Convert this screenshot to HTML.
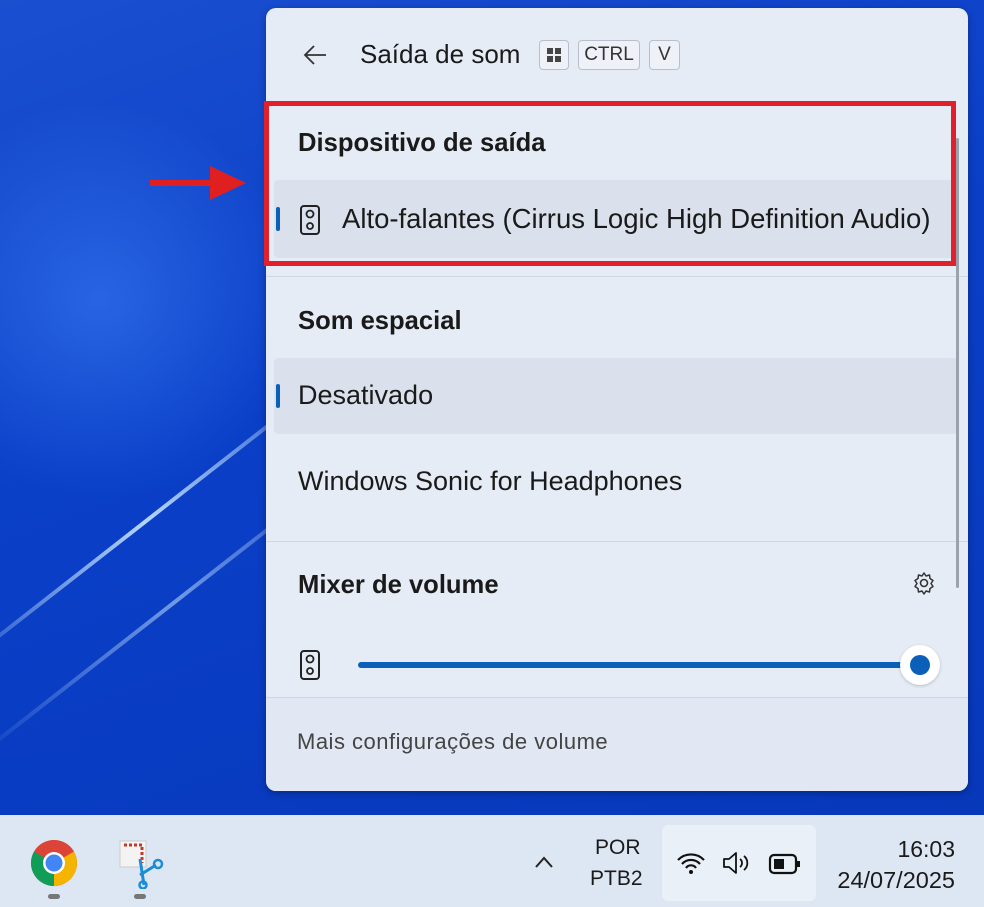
<!DOCTYPE html>
<html><head><meta charset="utf-8"><style>
*{margin:0;padding:0;box-sizing:border-box}
body{width:984px;height:907px;overflow:hidden;position:relative;font-family:"Liberation Sans",sans-serif;
background:linear-gradient(160deg,#1a4fd0 0%,#0a3fc8 40%,#0637b8 100%);}
.streak{position:absolute;left:-60px;top:680px;width:520px;height:4px;background:linear-gradient(90deg,rgba(255,255,255,0),rgba(200,230,255,.9),rgba(255,255,255,0));transform:rotate(-38deg);transform-origin:left}
.glow{position:absolute;left:-100px;top:100px;width:400px;height:400px;background:radial-gradient(ellipse,rgba(70,140,255,.45),rgba(0,0,0,0) 70%)}
.panel{position:absolute;left:266px;top:8px;width:702px;height:783px;background:#e6ecf6;border-radius:10px;box-shadow:0 2px 8px rgba(0,0,0,.3)}
.t{position:absolute;color:#1a1a1a;white-space:nowrap}
.key{position:absolute;top:32px;height:30px;border:1px solid #b8bfca;border-radius:4px;background:#eef2f8;font-size:19px;color:#333;line-height:28px;text-align:center}
.sep{position:absolute;left:0;width:702px;height:1px;background:#d0d7e2}
.sel{position:absolute;left:8px;width:684px;background:#dae1ec;border-radius:4px}
.bar{position:absolute;left:10px;width:4px;height:24px;background:#0a5fb8;border-radius:2px}
.taskbar{position:absolute;left:0;top:815px;width:984px;height:92px;background:#dde6f3}
</style></head><body>
<div class="glow"></div>
<div class="streak"></div>
<div class="streak" style="top:760px;left:-30px;opacity:.6"></div>
<div style="position:absolute;left:150px;top:180px;width:62px;height:6px;background:#e02020"></div>
<div style="position:absolute;left:210px;top:166px;width:0;height:0;border-top:17px solid transparent;border-bottom:17px solid transparent;border-left:36px solid #e02020"></div>
<div class="panel">
  <svg style="position:absolute;left:36px;top:35px" width="26" height="24" viewBox="0 0 26 24"><path d="M24 12H3M12 3L3 12l9 9" fill="none" stroke="#333" stroke-width="1.8"/></svg>
  <div class="t" style="left:94px;top:31px;font-size:26px">Saída de som</div>
  <div class="key" style="left:273px;width:30px"><svg width="14" height="14" viewBox="0 0 14 14" style="margin-top:7px"><rect x="0" y="0" width="6" height="6" fill="#444"/><rect x="8" y="0" width="6" height="6" fill="#444"/><rect x="0" y="8" width="6" height="6" fill="#444"/><rect x="8" y="8" width="6" height="6" fill="#444"/></svg></div>
  <div class="key" style="left:312px;width:62px">CTRL</div>
  <div class="key" style="left:383px;width:31px">V</div>

  <div class="t" style="left:32px;top:121px;font-size:25.6px;font-weight:bold">Dispositivo de saída</div>
  <div class="sel" style="top:172px;height:78px"></div>
  <div class="bar" style="top:199px"></div>
  <svg style="position:absolute;left:34px;top:197px" width="20" height="30" viewBox="0 0 20 30"><rect x="1" y="1" width="18" height="28" rx="3" fill="none" stroke="#222" stroke-width="2"/><circle cx="10" cy="9" r="3.5" fill="none" stroke="#222" stroke-width="1.8"/><circle cx="10" cy="21" r="3" fill="none" stroke="#222" stroke-width="1.8"/></svg>
  <div class="t" style="left:76px;top:195px;font-size:27.5px">Alto-falantes (Cirrus Logic High Definition Audio)</div>
  <div class="sep" style="top:268px"></div>

  <div class="t" style="left:32px;top:299px;font-size:25.6px;font-weight:bold">Som espacial</div>
  <div class="sel" style="top:350px;height:76px"></div>
  <div class="bar" style="top:376px"></div>
  <div class="t" style="left:32px;top:372px;font-size:27px">Desativado</div>
  <div class="t" style="left:32px;top:458px;font-size:27px">Windows Sonic for Headphones</div>
  <div class="sep" style="top:533px"></div>

  <div class="t" style="left:32px;top:563px;font-size:25.6px;font-weight:bold">Mixer de volume</div>
  <svg style="position:absolute;left:646px;top:563px" width="24" height="24" viewBox="0 0 24 24"><circle cx="12" cy="12" r="3.5" fill="none" stroke="#333" stroke-width="1.6"/><path d="M12 2l2 3 3.5-1 .5 3.5 3 2-2 3 2 3-3 2-.5 3.5-3.5-1-2 3-2-3-3.5 1-.5-3.5-3-2 2-3-2-3 3-2 .5-3.5 3.5 1z" fill="none" stroke="#333" stroke-width="1.5" stroke-linejoin="round"/></svg>
  <svg style="position:absolute;left:34px;top:642px" width="20" height="30" viewBox="0 0 20 30"><rect x="1" y="1" width="18" height="28" rx="3" fill="none" stroke="#222" stroke-width="2"/><circle cx="10" cy="9" r="3.5" fill="none" stroke="#222" stroke-width="1.8"/><circle cx="10" cy="21" r="3" fill="none" stroke="#222" stroke-width="1.8"/></svg>
  <div style="position:absolute;left:92px;top:654px;width:560px;height:6px;background:#0a5fb8;border-radius:3px"></div>
  <div style="position:absolute;left:634px;top:637px;width:40px;height:40px;border-radius:50%;background:#fff;box-shadow:0 1px 3px rgba(0,0,0,.2)"></div>
  <div style="position:absolute;left:644px;top:647px;width:20px;height:20px;border-radius:50%;background:#0a5fb8"></div>
  <div class="sep" style="top:689px"></div>
  <div style="position:absolute;left:0;top:690px;width:702px;height:93px;background:#e1e8f3;border-radius:0 0 10px 10px"></div>
  <div class="t" style="left:31px;top:721px;font-size:22px;letter-spacing:0.5px;color:#444">Mais configurações de volume</div>
  <div style="position:absolute;left:690px;top:130px;width:3px;height:450px;background:#9aa2ad;border-radius:2px"></div>
</div>
<div style="position:absolute;left:264px;top:101px;width:692px;height:165px;border:5px solid #e0202a"></div>

<div class="taskbar">
  <svg style="position:absolute;left:30px;top:24px" width="48" height="48" viewBox="0 0 48 48"><circle cx="24" cy="24" r="23" fill="#db4437"/><path d="M24 24L4.1 12.5A23 23 0 0 0 24 47z" fill="#0f9d58"/><path d="M24 24L24 47A23 23 0 0 0 43.9 12.5z" fill="#f4b400"/><path d="M24 24L4.1 12.5A23 23 0 0 1 43.9 12.5z" fill="#db4437"/><circle cx="24" cy="24" r="11" fill="#fff"/><circle cx="24" cy="24" r="8.5" fill="#4285f4"/></svg>
  <div style="position:absolute;left:48px;top:79px;width:12px;height:5px;border-radius:3px;background:#777"></div>
  <svg style="position:absolute;left:118px;top:24px" width="48" height="50" viewBox="0 0 48 50"><rect x="2" y="2" width="26" height="26" fill="#f3f3f3" stroke="#ccc"/><path d="M6 6h18v18" fill="none" stroke="#c0392b" stroke-width="3" stroke-dasharray="3 2"/><path d="M22 20l4 26M38 26L22 36" stroke="#1a8cd8" stroke-width="3"/><circle cx="40" cy="25" r="4" fill="none" stroke="#1a8cd8" stroke-width="2.5"/><circle cx="25" cy="46" r="3.5" fill="none" stroke="#1a8cd8" stroke-width="2.5"/></svg>
  <div style="position:absolute;left:134px;top:79px;width:12px;height:5px;border-radius:3px;background:#777"></div>
  <svg style="position:absolute;left:534px;top:40px" width="20" height="14" viewBox="0 0 20 14"><path d="M2 12L10 3l8 9" fill="none" stroke="#222" stroke-width="2"/></svg>
  <div class="t" style="left:595px;top:21px;font-size:21px">POR</div>
  <div class="t" style="left:590px;top:52px;font-size:21px">PTB2</div>
  <div style="position:absolute;left:662px;top:10px;width:154px;height:76px;background:#eaf0f8;border-radius:6px"></div>
  <svg style="position:absolute;left:676px;top:36px" width="30" height="24" viewBox="0 0 30 24"><path d="M2 9a18 18 0 0 1 26 0M6 13a12 12 0 0 1 18 0M10 17a6 6 0 0 1 10 0" fill="none" stroke="#111" stroke-width="2.2"/><circle cx="15" cy="21" r="2" fill="#111"/></svg>
  <svg style="position:absolute;left:722px;top:36px" width="30" height="24" viewBox="0 0 30 24"><path d="M2 8h5l7-6v20l-7-6H2z" fill="none" stroke="#111" stroke-width="1.8" stroke-linejoin="round"/><path d="M18 8a5 5 0 0 1 0 8M22 5a9 9 0 0 1 0 14" fill="none" stroke="#111" stroke-width="1.8"/></svg>
  <svg style="position:absolute;left:768px;top:38px" width="34" height="22" viewBox="0 0 34 22"><rect x="2" y="2" width="26" height="18" rx="4" fill="none" stroke="#111" stroke-width="2.2"/><rect x="6" y="6" width="10" height="10" fill="#111"/><rect x="29" y="8" width="3" height="6" fill="#111"/></svg>
  <div class="t" style="right:29px;top:21px;font-size:23px">16:03</div>
  <div class="t" style="right:29px;top:52px;font-size:23.5px">24/07/2025</div>
</div>
</body></html>
